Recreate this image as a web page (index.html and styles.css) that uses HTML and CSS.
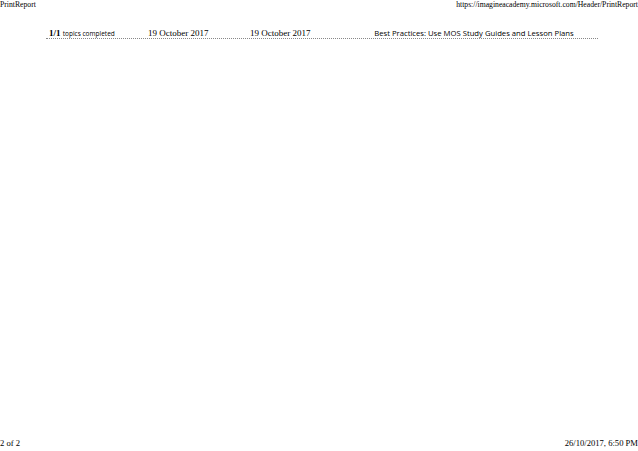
FILE: index.html
```html
<!DOCTYPE html>
<html>
<head>
<meta charset="utf-8">
<link rel="stylesheet" href="styles.css">
</head>
<body>
<div class="page">
  <header class="top">
    <span>PrintReport</span>
    <span>https://imagineacademy.microsoft.com/Header/PrintReport</span>
  </header>
  <div class="row">
    <div class="cell c1"><b class="count">1/1</b> <span class="small">topics completed</span></div>
    <div class="cell c2">19 October 2017</div>
    <div class="cell c3">19 October 2017</div>
    <div class="cell c4">Best Practices: Use MOS Study Guides and Lesson Plans</div>
  </div>
  <div class="spacer"></div>
  <footer class="bottom">
    <span>2 of 2</span>
    <span>26/10/2017, 6:50 PM</span>
  </footer>
</div>
</body>
</html>
```

FILE: styles.css
```css
html, body { margin: 0; padding: 0; background: #fff; }
.page {
  width: 638px;
  height: 451px;
  display: flex;
  flex-direction: column;
  font-family: "Liberation Serif", serif;
  color: #000;
}
.top, .bottom {
  display: flex;
  justify-content: space-between;
  font-size: 7.7px;
  line-height: 9px;
}
.row {
  display: flex;
  margin: 20px 0 0 46px;
  width: 552px;
  border-bottom: 1px dotted #888;
  align-items: baseline;
  height: 9px;
}
.cell { white-space: nowrap; line-height: 9px; }
.c1 { width: 102px; padding-left: 3px; box-sizing: border-box; font-size: 9px; }
.count { font-weight: bold; }
.small { font-family: "Open Sans", sans-serif; font-size: 6.5px; }
.c2, .c3 { width: 102px; font-size: 9px; }
.c4 {
  flex: 1;
  text-align: center;
  padding-right: 2px;
  font-family: "Open Sans", sans-serif;
  font-size: 7.7px;
}
.spacer { flex: 1; }
.bottom { margin-bottom: 3px; font-size: 8.6px; }
```
